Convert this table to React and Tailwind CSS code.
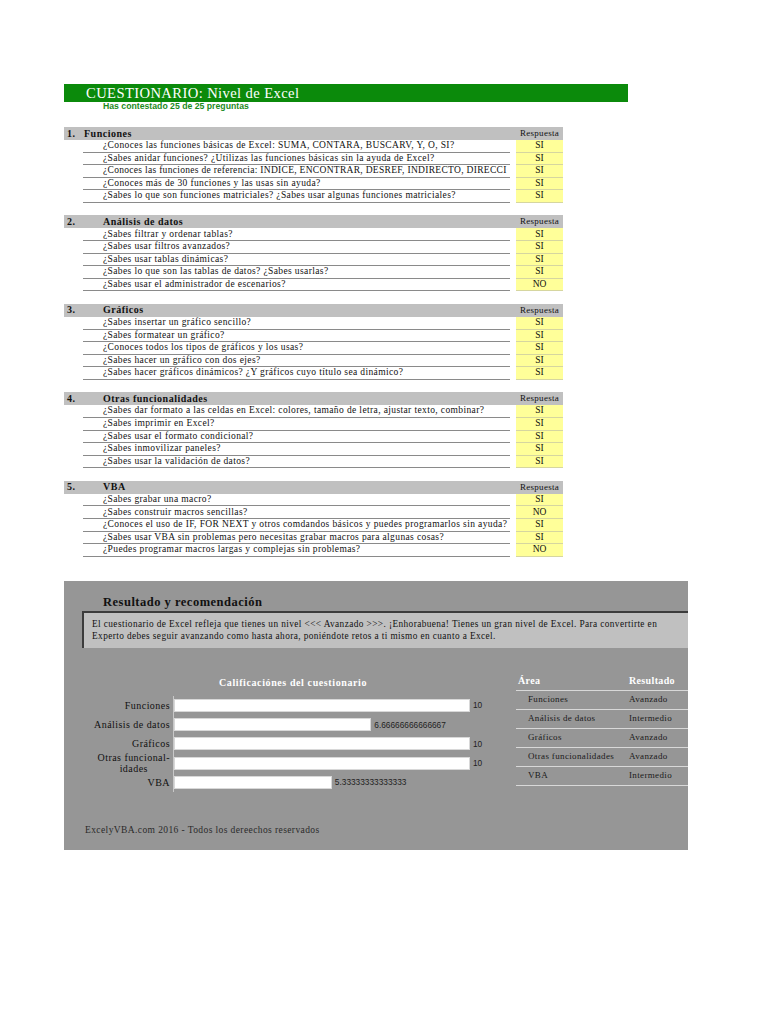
const sections = [
  {
    n: "1.",
    title: "Funciones",
    indent: false,
    rows: [
      ["¿Conoces las funciones básicas de Excel: SUMA, CONTARA, BUSCARV, Y, O, SI?", "SI"],
      ["¿Sabes anidar funciones? ¿Utilizas las funciones básicas sin la ayuda de Excel?", "SI"],
      ["¿Conoces las funciones de referencia: INDICE, ENCONTRAR, DESREF, INDIRECTO, DIRECCI", "SI", true],
      ["¿Conoces más de 30 funciones y las usas sin ayuda?", "SI"],
      ["¿Sabes lo que son funciones matriciales? ¿Sabes usar algunas funciones matriciales?", "SI"],
    ],
  },
  {
    n: "2.",
    title: "Análisis de datos",
    indent: true,
    rows: [
      ["¿Sabes filtrar y ordenar tablas?", "SI"],
      ["¿Sabes usar filtros avanzados?", "SI"],
      ["¿Sabes usar tablas dinámicas?", "SI"],
      ["¿Sabes lo que son las tablas de datos? ¿Sabes usarlas?", "SI"],
      ["¿Sabes usar el administrador de escenarios?", "NO"],
    ],
  },
  {
    n: "3.",
    title: "Gráficos",
    indent: true,
    rows: [
      ["¿Sabes insertar un gráfico sencillo?", "SI"],
      ["¿Sabes formatear un gráfico?", "SI"],
      ["¿Conoces todos los tipos de gráficos y los usas?", "SI"],
      ["¿Sabes hacer un gráfico con dos ejes?", "SI"],
      ["¿Sabes hacer gráficos dinámicos? ¿Y gráficos cuyo título sea dinámico?", "SI"],
    ],
  },
  {
    n: "4.",
    title: "Otras funcionalidades",
    indent: true,
    rows: [
      ["¿Sabes dar formato a las celdas en Excel: colores, tamaño de letra, ajustar texto, combinar?", "SI"],
      ["¿Sabes imprimir en Excel?", "SI"],
      ["¿Sabes usar el formato condicional?", "SI"],
      ["¿Sabes inmovilizar paneles?", "SI"],
      ["¿Sabes usar la validación de datos?", "SI"],
    ],
  },
  {
    n: "5.",
    title: "VBA",
    indent: true,
    rows: [
      ["¿Sabes grabar una macro?", "SI"],
      ["¿Sabes construir macros sencillas?", "NO"],
      ["¿Conoces el uso de IF, FOR NEXT y otros comdandos básicos y puedes programarlos sin ayuda?", "SI"],
      ["¿Sabes usar VBA sin problemas pero necesitas grabar macros para algunas cosas?", "SI"],
      ["¿Puedes programar macros largas y complejas sin problemas?", "NO"],
    ],
  },
];

const scores = [
  { label: "Funciones", value: 10, text: "10" },
  { label: "Análisis de datos", value: 6.66666666666667, text: "6.66666666666667" },
  { label: "Gráficos", value: 10, text: "10" },
  { label: "Otras funcional-", label2: "idades", value: 10, text: "10" },
  { label: "VBA", value: 5.33333333333333, text: "5.33333333333333" },
];

const results = [
  ["Funciones", "Avanzado"],
  ["Análisis de datos", "Intermedio"],
  ["Gráficos", "Avanzado"],
  ["Otras funcionalidades", "Avanzado"],
  ["VBA", "Intermedio"],
];

function Section({ s, first }) {
  return (
    <div className={`w-[499px] ${first ? "" : "mt-[12.5px]"}`}>
      <div className="flex h-[13px] items-center bg-[#c0c0c0] text-[10px] font-bold leading-none tracking-[0.5px]">
        <span className="w-[20px] pl-[3px]">{s.n}</span>
        <span className={`flex-1 ${s.indent ? "pl-[19px]" : ""}`}>{s.title}</span>
        <span className="w-[47px] text-center text-[9px] font-normal tracking-[0.3px]">Respuesta</span>
      </div>
      {s.rows.map(([q, a, tight], i) => (
        <div key={i} className="flex h-[12.6px] text-[9.5px] leading-none">
          <div className="w-[19px]" />
          <div
            className={`flex w-[427px] items-center whitespace-nowrap border-b border-[#8a8a8a] pl-[20px] ${
              tight ? "tracking-[0.3px]" : "tracking-[0.38px]"
            }`}
          >
            {q}
          </div>
          <div className="w-[6px]" />
          <div className="flex w-[47px] items-center justify-center border-b border-[#d6d6a0] bg-[#ffff99]">
            {a}
          </div>
        </div>
      ))}
    </div>
  );
}

export default function App() {
  return (
    <div className="min-h-[1024px] w-[768px] bg-white pt-[84px] font-['Liberation_Serif',serif] text-[#111]">
      <div className="ml-[64px] flex h-[18px] w-[564px] items-center bg-[#0b8a0b] pl-[22px] text-[14.6px] leading-none tracking-[0.4px] text-white">
        CUESTIONARIO: Nivel de Excel
      </div>
      <div className="ml-[103px] h-[9px] font-['Liberation_Sans',sans-serif] text-[8.7px] font-bold leading-[9px] text-[#1b8a1b]">
        Has contestado 25 de 25 preguntas
      </div>

      <div className="ml-[64px] mt-[16px]">
        {sections.map((s, i) => (
          <Section key={s.n} s={s} first={i === 0} />
        ))}
      </div>

      <div className="ml-[64px] mt-[24px] flex h-[269px] w-[624px] flex-col bg-[#969696]">
        <div className="mt-[15px] pl-[39px] text-[12.5px] font-bold leading-[12px] tracking-[0.5px]">
          Resultado y recomendación
        </div>
        <div className="ml-[18px] mt-[3px] h-[37px] border-l-2 border-t-2 border-[#3c3c3c] bg-[#c0c0c0] pl-[8px] pt-[5px] text-[9.3px] leading-[12px] tracking-[0.4px]">
          El cuestionario de Excel refleja que tienes un nivel &lt;&lt;&lt; Avanzado &gt;&gt;&gt;. ¡Enhorabuena! Tienes un gran nivel de Excel. Para convertirte en
          <br />
          Experto debes seguir avanzando como hasta ahora, poniéndote retos a ti mismo en cuanto a Excel.
        </div>

        <div className="mt-[24px] flex">
          <div className="w-[458px]">
            <div className="mt-[5px] h-[12px] text-center text-[10px] font-bold leading-[12px] tracking-[0.6px] text-white">
              Calificaciónes del cuestionario
            </div>
            <div className="mt-[7px]">
              {scores.map((r) => (
                <div key={r.label} className="flex h-[19.25px] items-center">
                  <div className="flex w-[109px] justify-end pr-[3px] text-[10px] leading-[11px] tracking-[0.45px]">
                    {r.label2 ? (
                      <div className="text-center">
                        {r.label}
                        <br />
                        {r.label2}
                      </div>
                    ) : (
                      r.label
                    )}
                  </div>
                  <div className="flex h-full items-center border-l border-[#c8c8c8]">
                    <div
                      className="h-[13px] border border-[#d8d8d8] bg-white"
                      style={{ width: `${(r.value / 10) * 296}px` }}
                    />
                    <span className="ml-[3px] font-['Liberation_Sans',sans-serif] text-[8.3px] text-[#222]">
                      {r.text}
                    </span>
                  </div>
                </div>
              ))}
            </div>
          </div>

          <div className="ml-[-6px] w-[172px] text-[9px] leading-none tracking-[0.35px]">
            <div className="flex h-[19px] items-center border-b border-[#d8d8d8] text-[10px] font-bold text-white">
              <span className="w-[113px] pl-[2px]">Área</span>
              <span>Resultado</span>
            </div>
            {results.map(([a, r]) => (
              <div key={a} className="flex h-[19px] items-center border-b border-[#d8d8d8] text-[#1a1a1a]">
                <span className="w-[113px] pl-[12px]">{a}</span>
                <span>{r}</span>
              </div>
            ))}
          </div>
        </div>

        <div className="mt-auto mb-[15px] pl-[21px] text-[9.5px] leading-[10px] tracking-[0.4px] text-[#2a2a2a]">
          ExcelyVBA.com 2016 - Todos los dereechos reservados
        </div>
      </div>
    </div>
  );
}
